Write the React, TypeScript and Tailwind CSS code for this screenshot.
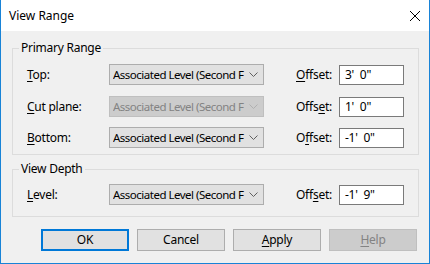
import React from "react";

const font = { fontFamily: '"Noto Sans", "Segoe UI", Arial, sans-serif' };

function Chevron({ color }: { color: string }) {
  return (
    <svg width="9" height="6" viewBox="0 0 9 6" className="shrink-0">
      <path d="M0.5 0.5 L4.5 4.5 L8.5 0.5" fill="none" stroke={color} strokeWidth="1" />
    </svg>
  );
}

function Combo({ disabled }: { disabled?: boolean }) {
  return (
    <div
      className={
        "w-[155px] h-[21px] flex items-center border pl-[3px] pr-[5px] " +
        (disabled
          ? "bg-[#cccccc] border-[#bfbfbf] text-[#838383]"
          : "bg-[#e1e1e1] border-[#adadad] text-black")
      }
    >
      <div className="w-[133px] overflow-hidden whitespace-nowrap leading-[19px] text-[11.5px] tracking-[-0.5px]">
        Associated Level (Second F
      </div>
      <div className="flex-1 flex justify-end">
        <Chevron color={disabled ? "#b0b0b0" : "#606060"} />
      </div>
    </div>
  );
}

function Row({
  label,
  offsetLabel,
  value,
  disabled,
}: {
  label: React.ReactNode;
  offsetLabel: React.ReactNode;
  value: string;
  disabled?: boolean;
}) {
  return (
    <div className="flex items-center h-[21px]">
      <div className="w-[82px] whitespace-nowrap">{label}</div>
      <Combo disabled={disabled} />
      <div className="ml-[32px] w-[43px] whitespace-nowrap">{offsetLabel}</div>
      <div className="w-[65px] h-[20px] bg-white border border-[#7a7a7a] pl-[5px] leading-[18px] whitespace-pre">
        {value}
      </div>
    </div>
  );
}

function U({ children }: { children: React.ReactNode }) {
  return <span className="underline decoration-1 underline-offset-[2px]">{children}</span>;
}

function Group({
  title,
  children,
  className,
}: {
  title: string;
  children: React.ReactNode;
  className?: string;
}) {
  return (
    <div className={"relative border border-[#dcdcdc] pl-[14px] " + (className ?? "")}>
      <div className="absolute left-[6px] top-[-9px] px-[2px] bg-[#f0f0f0] leading-[16px]">
        {title}
      </div>
      {children}
    </div>
  );
}

function Btn({
  children,
  variant,
}: {
  children: React.ReactNode;
  variant?: "default" | "disabled";
}) {
  const cls =
    variant === "default"
      ? "border-2 border-[#0078d7] bg-[#e1e1e1] text-black"
      : variant === "disabled"
      ? "border border-[#bfbfbf] bg-[#cccccc] text-[#838383]"
      : "border border-[#adadad] bg-[#e1e1e1] text-black";
  return (
    <div className={"w-[88px] h-[22px] flex items-center justify-center " + cls}>
      {children}
    </div>
  );
}

export default function App() {
  return (
    <div
      className="w-[430px] h-[264px] flex flex-col border-x border-b border-[#1883d7] text-[12px] tracking-[-0.25px] text-black"
      style={font}
    >
      <div className="h-[31px] bg-white flex items-center justify-between pl-[8px] pr-[9px] shrink-0">
        <span className="text-[12px] tracking-normal">View Range</span>
        <svg width="10" height="10" viewBox="0 0 10 10">
          <path d="M0 0 L10 10 M10 0 L0 10" stroke="#000" strokeWidth="1" />
        </svg>
      </div>
      <div className="flex-1 bg-[#f0f0f0] pl-[11px] pr-[10px] pt-[17px]">
        <Group title="Primary Range" className="pt-[15px] pb-[6px]">
          <Row
            label={<><U>T</U>op:</>}
            offsetLabel={<><U>O</U>ffset:</>}
            value={"3'  0\""}
          />
          <div className="mt-[11px]">
            <Row
              label={<><U>C</U>ut plane:</>}
              offsetLabel={<>Offs<U>e</U>t:</>}
              value={"1'  0\""}
              disabled
            />
          </div>
          <div className="mt-[10px]">
            <Row
              label={<><U>B</U>ottom:</>}
              offsetLabel={<>O<U>f</U>fset:</>}
              value={"-1'  0\""}
            />
          </div>
        </Group>
        <Group title="View Depth" className="mt-[14px] pt-[14px] pb-[11px]">
          <Row
            label={<><U>L</U>evel:</>}
            offsetLabel={<>Off<U>s</U>et:</>}
            value={"-1'  9\""}
          />
        </Group>
        <div className="mt-[12px] ml-[29px] flex gap-[8px]">
          <Btn variant="default">OK</Btn>
          <Btn>Cancel</Btn>
          <Btn>
            <span><U>A</U>pply</span>
          </Btn>
          <Btn variant="disabled">
            <span><U>H</U>elp</span>
          </Btn>
        </div>
      </div>
    </div>
  );
}
